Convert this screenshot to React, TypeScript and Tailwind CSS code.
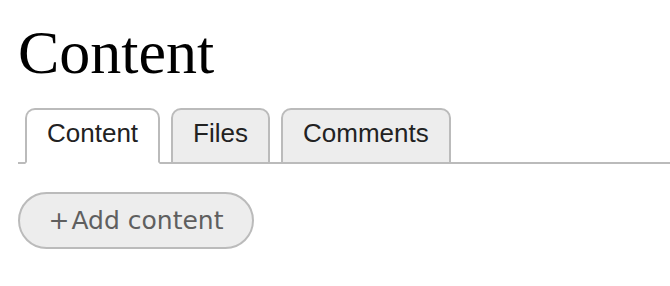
import React from 'react';

const tabs = [
  { label: 'Content', active: true },
  { label: 'Files', active: false },
  { label: 'Comments', active: false },
];

export default function App() {
  return (
    <div className="min-h-screen bg-white pl-[18px] pt-[21px]">
      <h1 className="text-[62px] leading-none text-black" style={{ fontFamily: '"Liberation Serif", Georgia, serif' }}>
        Content
      </h1>

      <ul className="mt-[25px] flex gap-[11px] border-b-2 border-[#bbb] pl-[7px]">
        {tabs.map(tab => (
          <li
            key={tab.label}
            className={`-mb-[2px] rounded-t-[10px] border-2 border-[#bbb] px-[20px] pt-[8px] pb-[14px] text-[26px] leading-[30px] text-[#222] ${
              tab.active ? 'border-b-white bg-white' : 'bg-[#ededed]'
            }`}
            style={{ fontFamily: '"Liberation Sans", Arial, sans-serif' }}
          >
            {tab.label}
          </li>
        ))}
      </ul>

      <button
        className="mt-[28px] flex h-[57px] w-[236px] items-center justify-center rounded-full border-2 border-[#bbb] bg-[#ededed] text-[25px] leading-[30px] text-[#5f5f5f]"
        style={{ fontFamily: '"DejaVu Sans", Verdana, sans-serif' }}
      >
        <span className="mr-[2px]">+</span>Add content
      </button>
    </div>
  );
}
